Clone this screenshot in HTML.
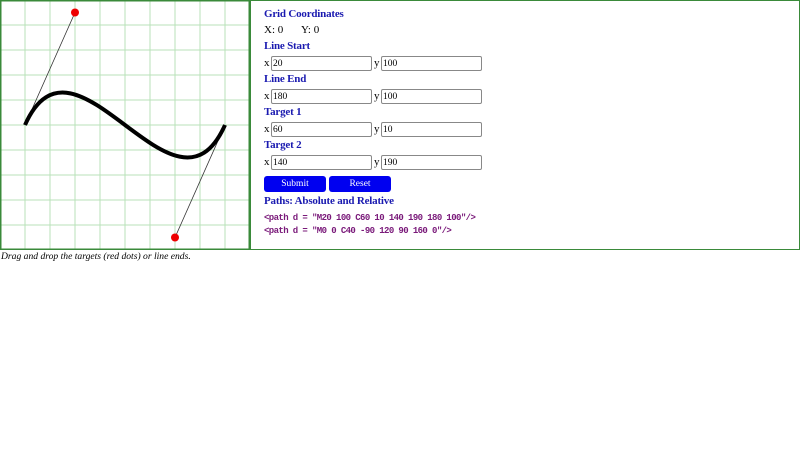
<!DOCTYPE html>
<html><head><style>
body{margin:0;width:800px;height:450px;background:#fff;font-family:"Liberation Serif",serif;position:relative;overflow:hidden}
#svg{position:absolute;left:0;top:0}
#panel{position:absolute;left:249px;top:0;width:551px;height:250px;box-sizing:border-box;border:1.5px solid #3a8a3a;border-left:2px solid #3a8a3a}
.h{position:absolute;left:13px;color:#1a1ab0;font-weight:bold;font-size:11px;letter-spacing:-0.2px}
.t{position:absolute;font-size:11px;color:#000}
.in{position:absolute;width:98px;height:13px;border:1px solid #888;border-radius:2px;font-size:9.5px;line-height:14px;padding-left:1px;box-sizing:content-box}
.btn{position:absolute;top:175px;width:62px;height:16px;background:#0000f0;color:#fff;border-radius:3px;font-size:9.5px;text-align:center;line-height:16px}
.code{position:absolute;left:13px;font-family:"Liberation Mono",monospace;font-weight:bold;font-size:9px;letter-spacing:-0.6px;color:#7a1a7a}
#cap{position:absolute;left:1px;top:251px;font-style:italic;font-size:9.6px}
</style></head><body>
<svg id="svg" width="250" height="250" viewBox="0 0 250 250">
<rect x="0.5" y="0.5" width="249" height="249" fill="#fff"/>
<g stroke="#b8e2b8" stroke-width="1">
<path d="M25 0V250M50 0V250M75 0V250M100 0V250M125 0V250M150 0V250M175 0V250M200 0V250M225 0V250M0 25H250M0 50H250M0 75H250M0 100H250M0 125H250M0 150H250M0 175H250M0 200H250M0 225H250"/>
</g>
<rect x="0.75" y="0.75" width="248.5" height="248.5" fill="none" stroke="#3a8a3a" stroke-width="1.5"/>
<line x1="25" y1="125" x2="75" y2="12.5" stroke="#333" stroke-width="0.8"/>
<line x1="225" y1="125" x2="175" y2="237.5" stroke="#333" stroke-width="0.8"/>
<path d="M25 125C75 12.5 175 237.5 225 125" fill="none" stroke="#000" stroke-width="4"/>
<circle cx="75" cy="12.5" r="4" fill="#e00"/>
<circle cx="175" cy="237.5" r="4" fill="#e00"/>
</svg>
<div id="panel">
<div class="h" style="top:7px">Grid Coordinates</div>
<div class="t" style="left:13px;top:23px">X: 0</div><div class="t" style="left:50px;top:23px">Y: 0</div>
<div class="h" style="top:39px">Line Start</div>
<div class="t" style="left:13px;top:56px">x</div><div class="in" style="left:20px;top:55px">20</div>
<div class="t" style="left:123px;top:56px">y</div><div class="in" style="left:130px;top:55px">100</div>
<div class="h" style="top:72px">Line End</div>
<div class="t" style="left:13px;top:89px">x</div><div class="in" style="left:20px;top:88px">180</div>
<div class="t" style="left:123px;top:89px">y</div><div class="in" style="left:130px;top:88px">100</div>
<div class="h" style="top:105px">Target 1</div>
<div class="t" style="left:13px;top:122px">x</div><div class="in" style="left:20px;top:121px">60</div>
<div class="t" style="left:123px;top:122px">y</div><div class="in" style="left:130px;top:121px">10</div>
<div class="h" style="top:138px">Target 2</div>
<div class="t" style="left:13px;top:155px">x</div><div class="in" style="left:20px;top:154px">140</div>
<div class="t" style="left:123px;top:155px">y</div><div class="in" style="left:130px;top:154px">190</div>
<div class="btn" style="left:13px">Submit</div><div class="btn" style="left:78px">Reset</div>
<div class="h" style="top:194px">Paths: Absolute and Relative</div>
<div class="code" style="top:212px">&lt;path d = "M20 100 C60 10 140 190 180 100"/&gt;</div>
<div class="code" style="top:225px">&lt;path d = "M0 0 C40 -90 120 90 160 0"/&gt;</div>
</div>
<div id="cap">Drag and drop the targets (red dots) or line ends.</div>
</body></html>
